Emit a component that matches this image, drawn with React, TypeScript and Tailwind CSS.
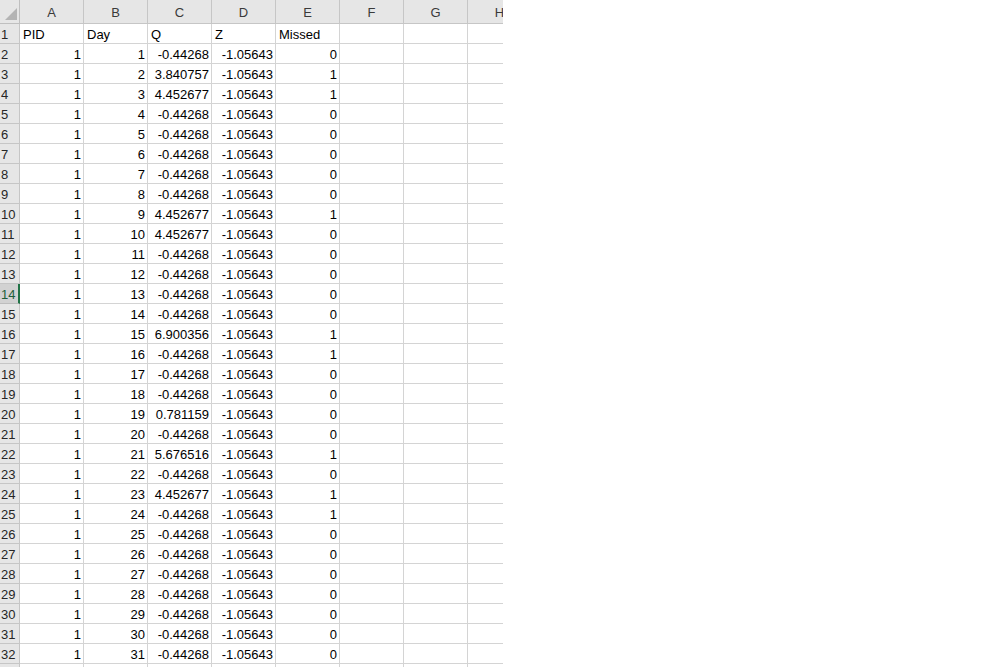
const qValues = [
  "-0.44268", "3.840757", "4.452677", "-0.44268", "-0.44268", "-0.44268", "-0.44268",
  "-0.44268", "4.452677", "4.452677", "-0.44268", "-0.44268", "-0.44268", "-0.44268",
  "6.900356", "-0.44268", "-0.44268", "-0.44268", "0.781159", "-0.44268", "5.676516",
  "-0.44268", "4.452677", "-0.44268", "-0.44268", "-0.44268", "-0.44268", "-0.44268",
  "-0.44268", "-0.44268", "-0.44268",
];
const missed = [0, 1, 1, 0, 0, 0, 0, 0, 1, 0, 0, 0, 0, 0, 1, 1, 0, 0, 0, 0, 1, 0, 1, 1, 0, 0, 0, 0, 0, 0, 0];

const columns = ["A", "B", "C", "D", "E", "F", "G", "H"];

// rows of cell values, row 1 is the header line of the sheet
const rows: string[][] = [
  ["PID", "Day", "Q", "Z", "Missed", "", "", ""],
  ...qValues.map((q, i) => ["1", String(i + 1), q, "-1.05643", String(missed[i]), "", "", ""]),
  ["", "", "", "", "", "", "", ""],
];

const cellBase = "h-[20px] border-r border-b border-[#d4d4d4] text-[13px] leading-[17px] pt-[2px] text-black overflow-hidden whitespace-nowrap";

export default function App() {
  return (
    <div
      className="w-[1008px] h-[667px] overflow-hidden bg-white"
      style={{ fontFamily: '"Liberation Sans", Arial, sans-serif' }}
    >
      <div className="w-[503px] overflow-hidden">
        <div className="grid grid-cols-[20px_64px_64px_64px_64px_64px_64px_64px_64px] w-[532px]">
          {/* corner */}
          <div className="h-[24px] bg-[#e6e6e6] border-r border-b border-[#bfbfbf] flex items-end justify-end pr-[2px] pb-[3px]">
            <svg width="12" height="12" viewBox="0 0 12 12">
              <polygon points="12,0 12,12 0,12" fill="#b4b4b4" />
            </svg>
          </div>
          {columns.map((c) => (
            <div
              key={c}
              className="h-[24px] bg-[#e6e6e6] border-r border-b border-[#c6c6c6] text-[13px] leading-[20px] text-center text-[#3a3a3a] pt-[3px]"
            >
              {c}
            </div>
          ))}

          {rows.map((row, r) => {
            const n = r + 1;
            const selected = n === 14;
            const last = n === rows.length;
            return [
              <div
                key={`h${n}`}
                className={`h-[20px] border-b text-[13px] leading-[17px] pt-[2px] pl-[1px] ${
                  selected
                    ? "bg-[#d2d2d2] border-[#bdbdbd] border-r-2 border-r-[#217346] text-[#1e5e3a]"
                    : "bg-[#e6e6e6] border-r border-[#c6c6c6] text-[#262626]"
                }`}
              >
                {last ? "" : n}
              </div>,
              ...row.map((v, c) => {
                const isText = n === 1;
                return (
                  <div
                    key={`${n}-${c}`}
                    className={`${cellBase} ${isText ? "text-left pl-[3px]" : "text-right pr-[2px]"}`}
                  >
                    {v}
                  </div>
                );
              }),
            ];
          })}
        </div>
      </div>
    </div>
  );
}
